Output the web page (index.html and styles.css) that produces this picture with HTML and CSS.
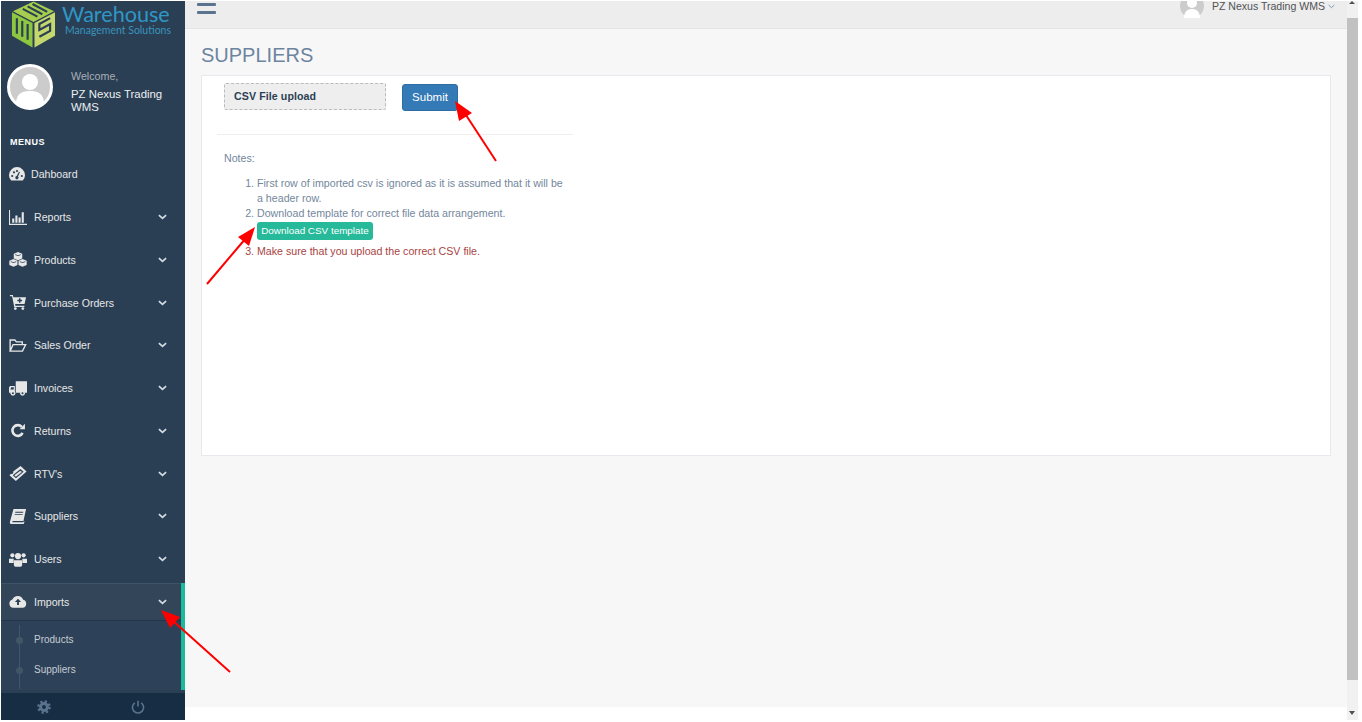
FILE: index.html
```html
<!DOCTYPE html>
<html lang="en">
<head>
<meta charset="utf-8">
<title>Suppliers import</title>
<link rel="stylesheet" href="styles.css">
</head>
<body>
<svg class="defs" aria-hidden="true">
  <defs>
    <symbol id="i-gauge" viewBox="0 0 16 13"><path d="M2.2 12.6A8 8 0 1 1 13.8 12.6Z"/><g class="cut"><circle cx="3.2" cy="8" r="1.1"/><circle cx="5" cy="4.3" r="1.1"/><circle cx="8" cy="3" r="1.1"/><circle cx="12.8" cy="8" r="1.1"/><path d="M10.9 4.3 9 8.4a1.6 1.6 0 1 1-1.3-.4l2.3-4.2z"/></g></symbol>
    <symbol id="i-chart" viewBox="0 0 17 14"><path d="M0 0h1v13h16v1H0z"/><path d="M3 8h2v4H3zM6 5h2v7H6zM9 7h2v5H9zM12 2h2v10h-2z"/></symbol>
    <symbol id="i-cubes" viewBox="0 0 17 14"><path d="M8.5 0 12.5 1.6V6L8.5 7.6 4.5 6V1.6Z"/><path d="M4.3 6.6 8 8.1V12.2L4.3 13.8 0.3 12.2V8.1Z"/><path d="M12.7 6.6 16.7 8.1V12.2L12.7 13.8 9 12.2V8.1Z"/><g class="cut"><path d="M5.8 2 8.5 3.1 11.2 2 11.2 2.7 8.5 3.8 5.8 2.7Z"/><path d="M1.7 8.7 4.3 9.7 6.8 8.7 6.8 9.3 4.3 10.3 1.7 9.3Z"/><path d="M10.2 8.7 12.7 9.7 15.4 8.7 15.4 9.3 12.7 10.3 10.2 9.3Z"/></g></symbol>
    <symbol id="i-cart" viewBox="0 0 15 14"><path d="M0 0h2.7l.5 2H15l-1.4 6.5H4.8l.3 1.5h8.4v1.2H4L2 1.2H0z"/><circle cx="5" cy="12.7" r="1.3"/><circle cx="12" cy="12.7" r="1.3"/><path class="cut" d="M8.4 3h1.4v1.5h1.5v1.3H9.8v1.5H8.4V5.8H6.9V4.5h1.5z"/></symbol>
    <symbol id="i-folder" viewBox="0 0 16 13"><path class="line" d="M1 11.5V1.6h4.2l1.4 1.7h5.2v2.4M1 11.5l2.6-5.8h11.2l-2.8 5.8z"/></symbol>
    <symbol id="i-truck" viewBox="0 0 16 13"><path d="M6 0h10v10.2H6zM1 4.2h4.2v6H0V5.5z"/><circle cx="3.5" cy="10.8" r="2.2"/><circle cx="12" cy="10.8" r="2.2"/><g class="cut"><circle cx="3.5" cy="10.8" r=".9"/><circle cx="12" cy="10.8" r=".9"/><path d="M2 5.4h2.2v2H1.2z"/></g></symbol>
    <symbol id="i-redo" viewBox="0 0 13 14"><path class="thick" d="M10.8 9.2A5 5 0 1 1 10 3.6"/><path d="M8 5.8h5V.6z"/></symbol>
    <symbol id="i-ticket" viewBox="0 0 16 14"><path d="M10.4 0 16 5.2 6 14 0 8.6l1.5-1.4a1.5 1.5 0 0 0 2-2z"/><path class="cut" d="M10.3 2.8 13.2 5.4 6.1 11.4 3.1 8.6Z"/><path d="M10.2 4.4 11.6 5.6 6 10 4.6 8.7Z"/></symbol>
    <symbol id="i-book" viewBox="0 0 15 14"><path d="M3.3 0H15l-2.4 11.2H3.2a1 1 0 0 0-1 1.2H12.5l.4-.9.7.3-.8 2.2H1.6A1.6 1.6 0 0 1 0 12z"/><path class="cut" d="M5 2.6h7.3v.8H4.8zM4.5 4.8h7.3v.8H4.3z"/></symbol>
    <symbol id="i-users" viewBox="0 0 17 14"><circle cx="3.2" cy="3" r="2"/><circle cx="13.8" cy="3" r="2"/><circle cx="8.5" cy="3.8" r="2.9"/><path d="M0 6.2h4.4v4H0zM12.6 6.2H17v4h-4.4z"/><path d="M4.6 7.6h7.8v4.6a1.6 1.6 0 0 1-1.6 1.6H6.2a1.6 1.6 0 0 1-1.6-1.6z"/></symbol>
    <symbol id="i-cloud" viewBox="0 0 17 12"><path d="M4 12A4 4 0 0 1 3.2 4.2 5.5 5.5 0 0 1 13.4 4.4 3.9 3.9 0 0 1 13 12Z"/><path class="cut" d="M8.5 3.4 11.4 6.4H9.4V9.4H7.6V6.4H5.6Z"/></symbol>
  </defs>
</svg>

<div class="frame">
  <aside class="sidebar">
    <div class="brand">
      <svg class="logo" viewBox="0 0 46 47" aria-hidden="true">
        <path class="lg-top" d="M23 0 44 10 23 21 2 10Z"/>
        <path class="lg-left" d="M1 11 22 22V47L1 35Z"/>
        <path class="lg-right" d="M45 11 24 22V47L45 35Z"/>
        <path class="lg-mark" d="M17 5 32 13M22 2.6 37 10.6M12 7.5 27 15.5"/>
        <path class="lg-mark" d="M6 17V33M11.500 20V36M17 23V39"/>
        <path class="lg-mark" d="M40 17 29 23V29L40 23V30L29 36"/>
      </svg>
      <div class="brand-text">
        <div class="brand-name">Warehouse</div>
        <div class="brand-sub">Management Solutions</div>
      </div>
    </div>

    <div class="profile">
      <svg class="avatar" viewBox="0 0 46 46" aria-hidden="true">
        <circle class="av-bg" cx="23" cy="23" r="21.5"/>
        <circle class="av-fg" cx="23" cy="18" r="8"/>
        <path class="av-fg" d="M9 38C10 29 16 27 23 27S36 29 37 38A21 21 0 0 1 9 38Z"/>
      </svg>
      <div class="profile-text">
        <div class="welcome">Welcome,</div>
        <div class="profile-name">PZ Nexus Trading WMS</div>
      </div>
    </div>

    <h3 class="menu-title">MENUS</h3>

    <nav class="menu">
      <a class="item item-dash"><svg class="ic"><use href="#i-gauge"/></svg><span class="label">Dahboard</span></a>
      <a class="item"><svg class="ic"><use href="#i-chart"/></svg><span class="label">Reports</span><svg class="chev" viewBox="0 0 8 5"><path d="M.8.8 4 3.8 7.2.8"/></svg></a>
      <a class="item"><svg class="ic"><use href="#i-cubes"/></svg><span class="label">Products</span><svg class="chev" viewBox="0 0 8 5"><path d="M.8.8 4 3.8 7.2.8"/></svg></a>
      <a class="item"><svg class="ic"><use href="#i-cart"/></svg><span class="label">Purchase Orders</span><svg class="chev" viewBox="0 0 8 5"><path d="M.8.8 4 3.8 7.2.8"/></svg></a>
      <a class="item"><svg class="ic"><use href="#i-folder"/></svg><span class="label">Sales Order</span><svg class="chev" viewBox="0 0 8 5"><path d="M.8.8 4 3.8 7.2.8"/></svg></a>
      <a class="item"><svg class="ic"><use href="#i-truck"/></svg><span class="label">Invoices</span><svg class="chev" viewBox="0 0 8 5"><path d="M.8.8 4 3.8 7.2.8"/></svg></a>
      <a class="item"><svg class="ic"><use href="#i-redo"/></svg><span class="label">Returns</span><svg class="chev" viewBox="0 0 8 5"><path d="M.8.8 4 3.8 7.2.8"/></svg></a>
      <a class="item"><svg class="ic"><use href="#i-ticket"/></svg><span class="label">RTV's</span><svg class="chev" viewBox="0 0 8 5"><path d="M.8.8 4 3.8 7.2.8"/></svg></a>
      <a class="item"><svg class="ic"><use href="#i-book"/></svg><span class="label">Suppliers</span><svg class="chev" viewBox="0 0 8 5"><path d="M.8.8 4 3.8 7.2.8"/></svg></a>
      <a class="item"><svg class="ic"><use href="#i-users"/></svg><span class="label">Users</span><svg class="chev" viewBox="0 0 8 5"><path d="M.8.8 4 3.8 7.2.8"/></svg></a>
      <div class="group">
        <a class="item item-active"><svg class="ic"><use href="#i-cloud"/></svg><span class="label">Imports</span><svg class="chev" viewBox="0 0 8 5"><path d="M.8.8 4 3.8 7.2.8"/></svg></a>
        <div class="submenu">
          <a class="subitem">Products</a>
          <a class="subitem">Suppliers</a>
        </div>
      </div>
    </nav>

    <div class="side-foot">
      <svg class="foot-ic" viewBox="0 0 14 14" aria-hidden="true"><circle class="cog-teeth" cx="7" cy="7" r="5.6"/><circle class="cog-ring" cx="7" cy="7" r="3.4"/></svg>
      <svg class="foot-ic" viewBox="0 0 14 14" aria-hidden="true"><path class="power" d="M3.8 2.8A5.6 5.6 0 1 0 10.2 2.8M7 .8V6.6"/></svg>
    </div>
  </aside>

  <main class="main">
    <header class="topbar">
      <div class="burger"><span></span><span></span></div>
      <div class="user">
        <svg class="user-av" viewBox="0 0 24 24" aria-hidden="true"><circle class="av-bg" cx="12" cy="12" r="12"/><circle class="av-fg" cx="12" cy="9" r="5"/><path class="av-fg" d="M4 24C4 17 8 15 12 15S20 17 20 24Z"/></svg>
        <span class="user-name">PZ Nexus Trading WMS</span>
        <svg class="user-chev" viewBox="0 0 8 5"><path d="M.8.8 4 3.8 7.2.8"/></svg>
      </div>
    </header>

    <section class="content">
      <h1 class="title">SUPPLIERS</h1>
      <div class="card">
        <div class="upload-row">
          <div class="file-box">CSV File upload</div>
          <button class="btn-submit" type="button">Submit</button>
        </div>
        <hr class="rule">
        <div class="notes">
          <p class="notes-head">Notes:</p>
          <ol class="notes-list">
            <li>First row of imported csv is ignored as it is assumed that it will be a header row.</li>
            <li>Download template for correct file data arrangement.<br><a class="btn-csv">Download CSV template</a></li>
            <li class="danger">Make sure that you upload the correct CSV file.</li>
          </ol>
        </div>
      </div>
    </section>
    <div class="page-foot"></div>
  </main>

  <div class="scrollbar">
    <span class="sb-up"></span>
    <span class="sb-thumb"></span>
    <span class="sb-down"></span>
  </div>

  <svg class="arrows" viewBox="0 0 1362 722" aria-hidden="true">
    <path class="a-line" d="M496 161 464 112"/>
    <path class="a-head" d="M455 101 472 113 459 121Z"/>
    <path class="a-line" d="M207 284 246 238"/>
    <path class="a-head" d="M255 227 249 246 238 237Z"/>
    <path class="a-line" d="M230 672 172 620"/>
    <path class="a-head" d="M161 610 180 617 170 628Z"/>
  </svg>
</div>
</body>
</html>
```

FILE: styles.css
```css
* { box-sizing: border-box; }

html, body {
  margin: 0;
  height: 100%;
  background: #fff;
  overflow: hidden;
}

body {
  font-family: "Liberation Sans", Arial, sans-serif;
  font-size: 10.6px;
  color: #73879c;
}

.defs { display: none; }

.frame {
  position: relative;
  display: flex;
  height: 720px;
  width: 1358px;
  padding: 1px 0 0 1px;
  overflow: hidden;
}

/* Sidebar */
.sidebar {
  flex: 0 0 184px;
  display: flex;
  flex-direction: column;
  background: #2a3f54;
  color: #e7e7e7;
}

.brand {
  display: flex;
  height: 50px;
  padding-left: 10px;
}

.logo {
  flex: 0 0 45px;
  width: 45px;
  height: 47px;
}

.lg-top { fill: #a6cd4e; }
.lg-left { fill: #8dc63f; }
.lg-right { fill: #c5d86d; }
.lg-mark { fill: none; stroke: #2a3f54; stroke-width: 2.2; }

.brand-text { padding: 2px 0 0 6px; }

.brand-name {
  font-family: Lato, sans-serif;
  font-size: 21.6px;
  line-height: 22px;
  color: #2f97c6;
}

.brand-sub {
  margin-left: 3px;
  font-family: Lato, sans-serif;
  font-size: 10.5px;
  line-height: 11px;
  white-space: nowrap;
  color: #3b93bd;
}

.profile {
  display: flex;
  height: 79px;
  padding: 13px 0 0 6px;
}

.avatar {
  flex: 0 0 46px;
  width: 46px;
  height: 46px;
}

.av-bg { fill: #ccc; stroke: #fff; stroke-width: 3; }
.av-fg { fill: #fff; }

.profile-text {
  padding: 5px 0 0 18px;
}

.welcome {
  font-size: 10.7px;
  line-height: 15px;
  color: #a9aeb4;
}

.profile-name {
  margin-top: 4px;
  font-size: 11.4px;
  line-height: 13px;
  color: #ecf0f1;
}

.menu-title {
  margin: 0 0 0 9px;
  height: 23px;
  font-size: 9px;
  line-height: 25px;
  font-weight: 700;
  letter-spacing: .5px;
  color: #fff;
}

.menu {
  display: flex;
  flex-direction: column;
}

.item {
  display: flex;
  align-items: center;
  height: 42.75px;
  padding-left: 8px;
  font-size: 10.6px;
  color: #e7e7e7;
}

.ic {
  flex: 0 0 18px;
  width: 18px;
  height: 15px;
  margin-right: 7px;
  fill: #e7e7e7;
}

.item-dash .ic {
  flex-basis: 16px;
  width: 16px;
  margin-right: 6px;
}

#i-folder .line { fill: none; stroke: #e7e7e7; stroke-width: 1.2; }
#i-redo .thick { fill: none; stroke: #e7e7e7; stroke-width: 2.4; }
.cut { fill: #2a3f54; }

.label { flex: 1; }

.chev {
  flex: 0 0 9px;
  width: 9px;
  height: 6px;
  margin-right: 18px;
  fill: none;
  stroke: #d5dbe1;
  stroke-width: 1.5;
}

.group {
  margin-top: 2.5px;
  border-right: 4px solid #1abb9c;
  background: #2d4158;
}

.item-active {
  height: 37.5px;
  background: #324559;
  border-top: 1px solid #3f5266;
  border-bottom: 1px solid #23364a;
}

.item-active .chev { margin-right: 14px; }

.submenu {
  position: relative;
  display: flex;
  flex-direction: column;
  padding: 4px 0 5px;
}

.submenu::before {
  content: "";
  position: absolute;
  left: 18px;
  top: 4px;
  bottom: 1px;
  width: 1px;
  background: #425668;
}

.subitem {
  position: relative;
  display: flex;
  align-items: center;
  height: 30px;
  padding-left: 33px;
  font-size: 10px;
  color: #c5ccd3;
}

.subitem::before {
  content: "";
  position: absolute;
  left: 15px;
  top: 12px;
  width: 7px;
  height: 7px;
  border-radius: 50%;
  background: #425668;
}

.side-foot {
  display: flex;
  gap: 80px;
  margin-top: auto;
  height: 27px;
  padding-left: 36px;
  background: #172d44;
}

.foot-ic {
  flex: 0 0 14px;
  width: 14px;
  height: 14px;
  margin-top: 7px;
}

.cog-teeth { fill: none; stroke: #5a738e; stroke-width: 2.4; stroke-dasharray: 2.2 2.2; }
.cog-ring { fill: none; stroke: #5a738e; stroke-width: 3; }
.power { fill: none; stroke: #5a738e; stroke-width: 1.6; }

/* Main */
.main {
  flex: 1;
  display: flex;
  flex-direction: column;
  min-width: 0;
}

.topbar {
  display: flex;
  justify-content: space-between;
  height: 28px;
  padding: 2px 12px 0 12px;
  background: #ededed;
  border-bottom: 1px solid #e2e5e8;
}

.burger {
  display: flex;
  flex-direction: column;
  gap: 5px;
  width: 19px;
}

.burger span {
  height: 3px;
  border-radius: 1px;
  background: #5a738e;
}

.user {
  display: flex;
  align-items: flex-start;
  overflow: hidden;
  height: 20px;
  margin-top: -2px;
}

.user-av {
  width: 24px;
  height: 24px;
  margin-top: -7px;
  margin-right: 8px;
}

.user-av .av-bg { stroke: none; }

.user-name {
  font-size: 10.55px;
  line-height: 11px;
  color: #515356;
}

.user-chev {
  width: 7px;
  height: 5px;
  margin: 3px 0 0 3px;
  fill: none;
  stroke: #73879c;
  stroke-width: 1;
}

.content {
  flex: 1;
  padding: 0 16px;
  background: #f7f7f7;
}

.title {
  margin: 0;
  height: 46px;
  padding-top: 15px;
  font-size: 20px;
  line-height: 23px;
  font-weight: 400;
  color: #6d84a0;
}

.card {
  height: 381px;
  padding: 7px 17px 0;
  background: #fff;
  border: 1px solid #e6e9ed;
}

.upload-row {
  display: flex;
  align-items: flex-start;
  gap: 16px;
  padding-left: 5px;
}

.file-box {
  width: 162px;
  height: 27px;
  padding-left: 9px;
  background: #eee;
  border: 1px dashed #bbb;
  border-radius: 2px;
  font-size: 10.6px;
  line-height: 24px;
  font-weight: 700;
  letter-spacing: .1px;
  color: #2a3f54;
}

.btn-submit {
  width: 56px;
  height: 27px;
  margin-top: 1px;
  padding: 0 0 2px;
  background: #337ab7;
  border: 1px solid #2e6da4;
  border-radius: 3px;
  font: 11.5px "Liberation Sans", Arial, sans-serif;
  color: #fff;
}

.rule {
  width: 356px;
  height: 1px;
  margin: 23px 0 0 -2px;
  border: 0;
  background: #eee;
}

.notes { padding: 0 0 0 5px; }

.notes-head {
  margin: 16px 0 0;
  font-size: 10.65px;
  line-height: 15px;
}

.notes-list {
  width: 342px;
  margin: 10px 0 0;
  padding-left: 33px;
  font-size: 10.65px;
  line-height: 15.2px;
}

.btn-csv {
  display: inline-block;
  width: 116px;
  height: 18px;
  background: #26b99a;
  border-radius: 3px;
  font-size: 9.9px;
  line-height: 17px;
  text-align: center;
  vertical-align: top;
  color: #fff;
}

.danger {
  margin-top: 4px;
  color: #a94442;
}

.page-foot {
  flex: 0 0 13px;
  background: #fff;
}

/* Browser scrollbar as seen in the capture */
.scrollbar {
  flex: 0 0 11px;
  display: flex;
  flex-direction: column;
  background: #f1f1f1;
}

.sb-up,
.sb-down {
  flex: 0 0 17px;
  position: relative;
}

.sb-up::after,
.sb-down::after {
  content: "";
  position: absolute;
  left: 2px;
  width: 0;
  height: 0;
  border-left: 3.5px solid transparent;
  border-right: 3.5px solid transparent;
}

.sb-up::after { top: 0; border-bottom: 3px solid #505050; }
.sb-down::after { bottom: 5px; border-top: 4px solid #505050; }

.sb-thumb {
  flex: 1;
  background: #c1c1c1;
  margin-bottom: 23px;
}

.arrows {
  position: absolute;
  left: 0;
  top: 0;
  width: 1362px;
  height: 722px;
  pointer-events: none;
}

.a-line { fill: none; stroke: #f00; stroke-width: 2; }
.a-head { fill: #f00; }
```
